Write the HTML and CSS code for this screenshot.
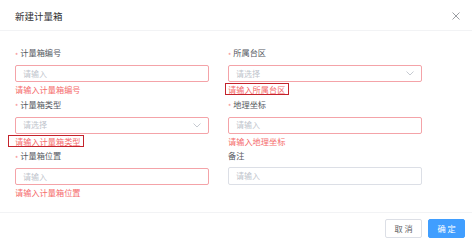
FILE: index.html
```html
<!DOCTYPE html>
<html lang="zh-CN">
<head>
<meta charset="utf-8">
<title>新建计量箱</title>
<link rel="stylesheet" href="styles.css">
</head>
<body>
<div class="dialog">
  <div class="dialog-header">
    <span class="dialog-title">新建计量箱</span>
    <svg class="close" width="8" height="8" viewBox="0 0 8 8"><path d="M0.5 0.5L7.5 7.5M7.5 0.5L0.5 7.5" stroke="#909399" stroke-width="0.9" fill="none"/></svg>
  </div>
  <div class="dialog-body">
    <div class="form-grid">
      <div class="item">
        <div class="label"><span class="star">*</span>计量箱编号</div>
        <div class="input error"><span class="ph">请输入</span></div>
        <div class="err">请输入计量箱编号</div>
      </div>
      <div class="item">
        <div class="label"><span class="star">*</span>所属台区</div>
        <div class="input error"><span class="ph">请选择</span><svg class="chev" width="8" height="5" viewBox="0 0 8 5"><path d="M0.5 0.5L4 4L7.5 0.5" stroke="#c0c4cc" stroke-width="0.9" fill="none"/></svg></div>
        <div class="err"><span class="mark mark-right">请输入所属台区</span></div>
      </div>
      <div class="item">
        <div class="label"><span class="star">*</span>计量箱类型</div>
        <div class="input error"><span class="ph">请选择</span><svg class="chev" width="8" height="5" viewBox="0 0 8 5"><path d="M0.5 0.5L4 4L7.5 0.5" stroke="#c0c4cc" stroke-width="0.9" fill="none"/></svg></div>
        <div class="err"><span class="mark mark-left">请输入计量箱类型</span></div>
      </div>
      <div class="item">
        <div class="label"><span class="star">*</span>地理坐标</div>
        <div class="input error"><span class="ph">请输入</span></div>
        <div class="err">请输入地理坐标</div>
      </div>
      <div class="item">
        <div class="label"><span class="star">*</span>计量箱位置</div>
        <div class="input error"><span class="ph">请输入</span></div>
        <div class="err">请输入计量箱位置</div>
      </div>
      <div class="item">
        <div class="label">备注</div>
        <div class="input"><span class="ph">请输入</span></div>
      </div>
    </div>
  </div>
  <div class="dialog-footer">
    <button class="btn btn-default">取 消</button>
    <button class="btn btn-primary">确 定</button>
  </div>
</div>
</body>
</html>
```
FILE: styles.css
```css
html, body {
  margin: 0;
  padding: 0;
  background: #ffffff;
}
body {
  font-family: "Noto Sans CJK SC", "Noto Sans", sans-serif;
  width: 474px;
  height: 246px;
  overflow: hidden;
}
.dialog {
  width: 472px;
  background: #fff;
}
.dialog-header {
  height: 31px;
  box-sizing: border-box;
  padding: 2px 12px 0 15px;
  display: flex;
  align-items: center;
  justify-content: space-between;
  border-bottom: 1px solid #f2f3f5;
}
.dialog-title {
  font-size: 9.5px;
  color: #303133;
  line-height: 12px;
}
.close {
  display: block;
}
.dialog-body {
  padding: 15px 0 14px 15px;
  border-bottom: 1px solid #f2f3f5;
}
.form-grid {
  display: grid;
  grid-template-columns: 194px 194px;
  column-gap: 19px;
  row-gap: 2.5px;
}
.item {
  display: flex;
  flex-direction: column;
  height: 49px;
}
.label {
  font-size: 8.2px;
  line-height: 12px;
  color: #555861;
  margin-bottom: 6px;
}
.star {
  color: #f78989;
  margin-right: 2px;
  font-size: 7px;
  position: relative;
  top: 1.5px;
}
.input {
  height: 18px;
  box-sizing: border-box;
  border: 1px solid #dcdfe6;
  border-radius: 2px;
  padding: 0 7px;
  display: flex;
  align-items: center;
  justify-content: space-between;
}
.input.error {
  border-color: #f4a3a8;
}
.ph {
  font-size: 8px;
  color: #c0c4cc;
  line-height: 12px;
}
.chev {
  display: block;
}
.err {
  font-size: 8.2px;
  line-height: 12px;
  margin-top: 1px;
  color: #f56c6c;
}
.mark {
  display: inline-block;
  outline: 1.5px solid #c4232c;
  outline-offset: -1.5px;
  line-height: 12px;
}
.mark-left {
  padding: 0 3px 0 7px;
  margin-left: -7px;
}
.mark-right {
  padding: 0 4px 0 3px;
  margin-left: -3px;
}
.dialog-footer {
  display: flex;
  justify-content: flex-end;
  gap: 6px;
  padding: 6px 7px 0 0;
}
.btn {
  width: 37px;
  height: 19px;
  box-sizing: border-box;
  border-radius: 2px;
  font-family: "Noto Sans CJK SC", "Noto Sans", sans-serif;
  font-size: 8.2px;
  padding: 0;
  line-height: 17px;
  cursor: pointer;
}
.btn-default {
  background: #fff;
  border: 1px solid #dcdfe6;
  color: #606266;
}
.btn-primary {
  background: #409eff;
  border: 1px solid #409eff;
  color: #fff;
}
```
